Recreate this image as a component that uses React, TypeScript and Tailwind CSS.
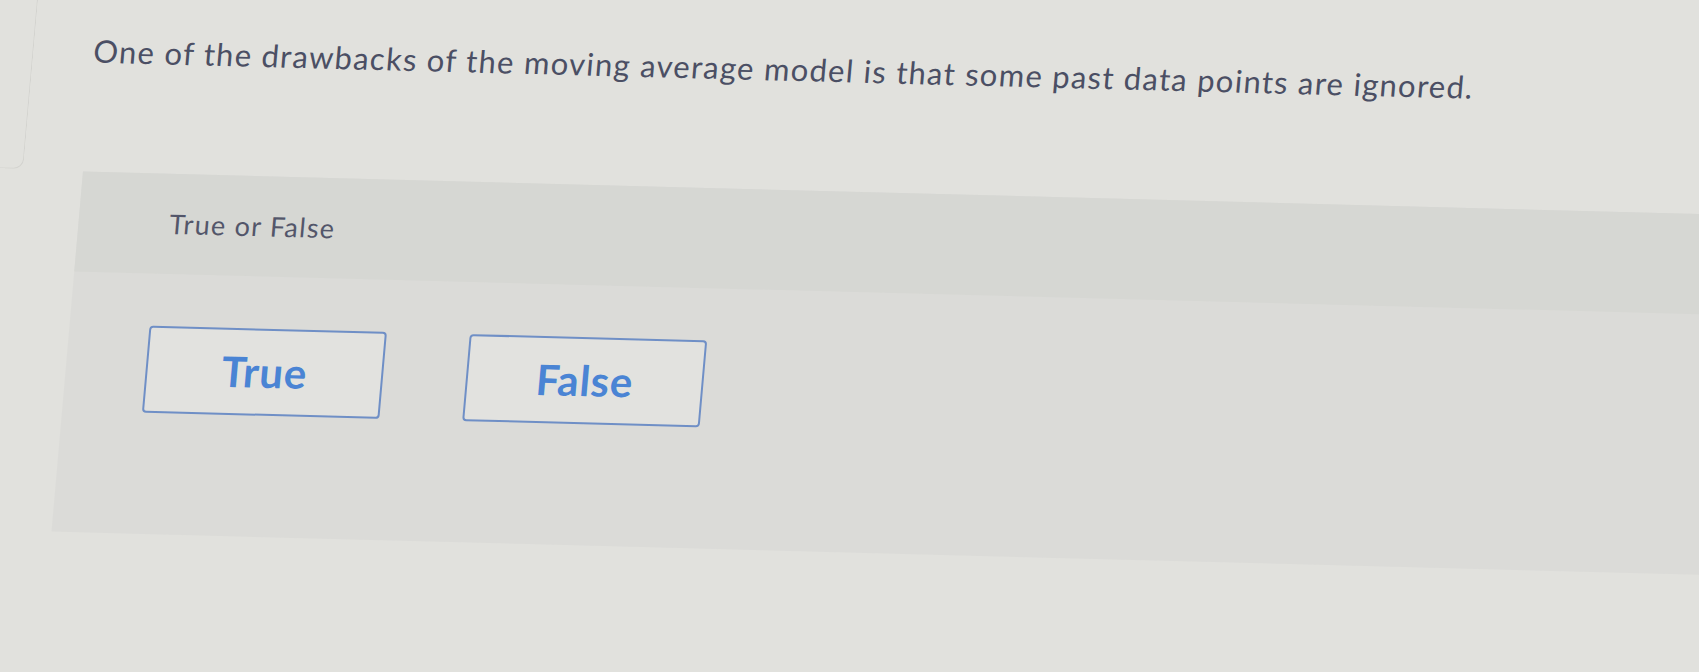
export default function App() {
  return (
    <div className="h-[672px] w-[1699px] overflow-hidden bg-[#e1e1dd] font-['Lato','Open_Sans',sans-serif]">
      {/* page content, sheared to the viewing angle */}
      <div className="flex w-[1850px] origin-top-left -skew-x-[5deg] skew-y-[1.5deg]">
        {/* left rail */}
        <div className="flex w-[38px] shrink-0 flex-col">
          <div className="-mt-[4px] h-[172px] rounded-br-[10px] border-r border-b border-[#d3d3cf]" />
          <div className="mt-[76px] h-[420px] w-[16px] border-t border-r border-[#d3d3cf]" />
        </div>

        <main className="flex-1 pl-[60px] pt-[33px]">
          <p className="text-[31px] leading-none tracking-[1.3px] text-[#4b4f64]">
            One of the drawbacks of the moving average model is that some past data points are ignored.
          </p>

          <section className="mt-[105px] bg-[#dbdbd8]">
            <div className="flex h-[100px] items-center bg-[#d6d7d3] pl-[91px] text-[27px] tracking-[1.3px] text-[#53566a]">
              True or False
            </div>
            <div className="flex gap-[83px] pt-[52px] pb-[121px] pl-[80px]">
              <button className="flex h-[87px] w-[238px] items-center justify-center rounded-[4px] border-2 border-[#6f8fc6] bg-[#e2e2df] text-[42px] font-bold tracking-[0.8px] text-[#4a84d4]">
                True
              </button>
              <button className="flex h-[87px] w-[238px] items-center justify-center rounded-[4px] border-2 border-[#6f8fc6] bg-[#e2e2df] text-[42px] font-bold tracking-[0.8px] text-[#4a84d4]">
                False
              </button>
            </div>
          </section>
        </main>
      </div>
    </div>
  );
}
